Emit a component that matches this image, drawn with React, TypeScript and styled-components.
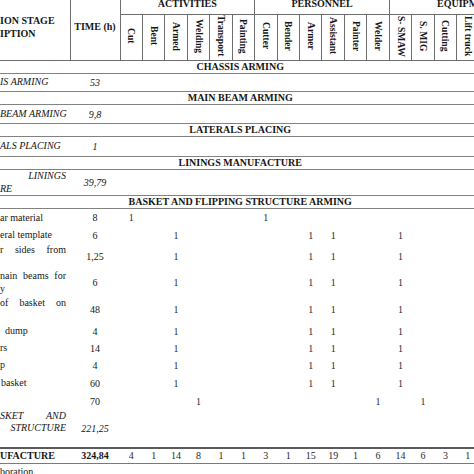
import React from 'react';
import styled, { createGlobalStyle } from 'styled-components';

const GlobalStyle = createGlobalStyle`
  html, body {
    margin: 0;
    padding: 0;
    background: #fff;
    overflow: hidden;
  }
`;

const Viewport = styled.div`
  width: 474px;
  height: 474px;
  overflow: hidden;
  font-family: "Liberation Serif", "Times New Roman", serif;
  color: #161616;
`;

const Table = styled.table`
  border-collapse: collapse;
  table-layout: fixed;
  width: 546.55px;
  margin-top: -7px;
  font-size: 10px;
`;

const Col = styled.col<{ $w: number }>`
  width: ${(p) => p.$w}px;
`;

const HeadCell = styled.th`
  border: 1px solid #6e6e6e;
  border-top: none;
  padding: 0;
  font-weight: bold;
  text-align: center;
  vertical-align: middle;
  line-height: 13px;
  white-space: nowrap;
  overflow: hidden;
`;

const StageHead = styled(HeadCell)`
  border-left: none;
  text-align: left;
`;

const GroupHead = styled(HeadCell)`
  height: 21px;
`;

const SubHead = styled(HeadCell)`
  height: 45px;
`;

const Vertical = styled.span`
  display: inline-block;
  writing-mode: vertical-rl;
  font-size: 9.6px;
  line-height: 10px;
`;

const SectionRow = styled.tr`
  height: 13px;
`;

const SectionCell = styled.td`
  border-top: 1.5px solid #828282;
  border-bottom: 1.5px solid #828282;
  padding: 0 66px 0 0;
  font-weight: bold;
  text-align: center;
  line-height: 10px;
  white-space: nowrap;
`;

const DataRow = styled.tr<{ $h: number }>`
  height: ${(p) => p.$h}px;
`;

const DescCell = styled.td<{ $italic?: boolean }>`
  padding: 0;
  vertical-align: middle;
  overflow: hidden;
  font-style: ${(p) => (p.$italic ? 'italic' : 'normal')};
  line-height: 12.5px;
`;

const DescLine = styled.div<{ $align: 'left' | 'justify' | 'right'; $indent: number }>`
  width: 66px;
  height: 12.5px;
  box-sizing: border-box;
  padding-left: ${(p) => p.$indent}px;
  white-space: nowrap;
  display: flex;
  justify-content: ${(p) =>
    p.$align === 'justify' ? 'space-between' : p.$align === 'right' ? 'flex-end' : 'flex-start'};
`;

const TimeCell = styled.td<{ $italic?: boolean; $bold?: boolean }>`
  padding: 0;
  text-align: center;
  vertical-align: middle;
  line-height: 11px;
  font-style: ${(p) => (p.$italic ? 'italic' : 'normal')};
  font-weight: ${(p) => (p.$bold ? 'bold' : 'normal')};
`;

const MarkCell = styled.td`
  padding: 0;
  text-align: center;
  vertical-align: middle;
  line-height: 11px;
  color: #2a2a2a;
`;

const TotalRow = styled.tr`
  height: 15px;

  & > td {
    border-top: 2px solid #5a5a5a;
    border-bottom: 1.5px solid #7a7a7a;
  }
`;

const TotalLabel = styled.td`
  padding: 0;
  font-weight: bold;
  line-height: 11px;
  white-space: nowrap;
  overflow: hidden;
`;

const Footnote = styled.p`
  margin: 2px 0 0;
  font-size: 10px;
  line-height: 12px;
  white-space: nowrap;
`;

const activities = ['Cut', 'Bent', 'Armed', 'Welding', 'Transport', 'Painting'];
const personnel = ['Cutter', 'Bender', 'Armer', 'Assistant', 'Painter', 'Welder'];
const equipment = ['S- SMAW', 'S. MIG', 'Cutting', 'Lift truck', 'Crane', 'Grinder', 'Drill'];
const columns = [...activities, ...personnel, ...equipment];
const COL_W = 22.45;

type Line = { t: string; align?: 'left' | 'justify' | 'right'; indent?: number };
type Row =
  | { kind: 'section'; title: string }
  | {
      kind: 'data';
      h: number;
      italic?: boolean;
      lines: Line[];
      time: string;
      marks?: Record<number, string>;
    };

const basket = { 2: '1', 8: '1', 9: '1', 12: '1' };

const rows: Row[] = [
  { kind: 'section', title: 'CHASSIS ARMING' },
  { kind: 'data', h: 18, italic: true, lines: [{ t: 'IS ARMING' }], time: '53' },
  { kind: 'section', title: 'MAIN BEAM ARMING' },
  { kind: 'data', h: 19, italic: true, lines: [{ t: 'BEAM ARMING' }], time: '9,8' },
  { kind: 'section', title: 'LATERALS PLACING' },
  { kind: 'data', h: 20, italic: true, lines: [{ t: 'ALS PLACING' }], time: '1' },
  { kind: 'section', title: 'LININGS MANUFACTURE' },
  {
    kind: 'data',
    h: 25,
    italic: true,
    lines: [{ t: 'LININGS', align: 'right' }, { t: 'RE' }],
    time: '39,79',
  },
  { kind: 'section', title: 'BASKET AND FLIPPING STRUCTURE ARMING' },
  { kind: 'data', h: 18, lines: [{ t: 'ar material' }], time: '8', marks: { 0: '1', 6: '1' } },
  { kind: 'data', h: 17, lines: [{ t: 'eral template' }], time: '6', marks: basket },
  {
    kind: 'data',
    h: 26,
    lines: [{ t: 'r sides from', align: 'justify' }, { t: '' }],
    time: '1,25',
    marks: basket,
  },
  {
    kind: 'data',
    h: 26,
    lines: [{ t: 'nain beams for', align: 'justify' }, { t: 'y' }],
    time: '6',
    marks: basket,
  },
  {
    kind: 'data',
    h: 27,
    lines: [{ t: 'of basket on', align: 'justify' }, { t: '' }],
    time: '48',
    marks: basket,
  },
  { kind: 'data', h: 18, lines: [{ t: 'dump', indent: 5 }], time: '4', marks: basket },
  { kind: 'data', h: 16, lines: [{ t: 'rs' }], time: '14', marks: basket },
  { kind: 'data', h: 18, lines: [{ t: 'p' }], time: '4', marks: basket },
  { kind: 'data', h: 18, lines: [{ t: 'basket', indent: 1 }], time: '60', marks: basket },
  { kind: 'data', h: 17, lines: [], time: '70', marks: { 3: '1', 11: '1', 13: '1' } },
  {
    kind: 'data',
    h: 37,
    italic: true,
    lines: [{ t: 'SKET AND', align: 'justify' }, { t: 'STRUCTURE', align: 'right' }, { t: '' }],
    time: '221,25',
  },
];

const totals = ['4', '1', '14', '8', '1', '1', '3', '1', '15', '19', '1', '6', '14', '6', '3', '1', '', '', ''];

const renderLine = (line: Line, i: number) => {
  const align = line.align ?? 'left';
  const words = align === 'justify' ? line.t.split(' ') : [line.t || '\u00a0'];
  return (
    <DescLine key={i} $align={align} $indent={line.indent ?? 0}>
      {words.map((w, j) => (
        <span key={j}>{w}</span>
      ))}
    </DescLine>
  );
};

export default function App() {
  return (
    <Viewport>
      <GlobalStyle />
      <Table>
        <colgroup>
          <Col $w={70} />
          <Col $w={50} />
          {columns.map((c) => (
            <Col key={c} $w={COL_W} />
          ))}
        </colgroup>
        <thead>
          <tr>
            <StageHead rowSpan={2}>
              ION STAGE
              <br />
              IPTION
            </StageHead>
            <HeadCell rowSpan={2}>TIME (h)</HeadCell>
            <GroupHead colSpan={activities.length}>ACTIVITIES</GroupHead>
            <GroupHead colSpan={personnel.length}>PERSONNEL</GroupHead>
            <GroupHead colSpan={equipment.length}>EQUIPMENT</GroupHead>
          </tr>
          <tr>
            {columns.map((c) => (
              <SubHead key={c}>
                <Vertical>{c}</Vertical>
              </SubHead>
            ))}
          </tr>
        </thead>
        <tbody>
          {rows.map((row, i) =>
            row.kind === 'section' ? (
              <SectionRow key={i}>
                <SectionCell colSpan={columns.length + 2}>{row.title}</SectionCell>
              </SectionRow>
            ) : (
              <DataRow key={i} $h={row.h}>
                <DescCell $italic={row.italic}>{row.lines.map(renderLine)}</DescCell>
                <TimeCell $italic={row.italic}>{row.time}</TimeCell>
                {columns.map((c, k) => (
                  <MarkCell key={c}>{row.marks?.[k] ?? ''}</MarkCell>
                ))}
              </DataRow>
            ),
          )}
          <TotalRow>
            <TotalLabel>UFACTURE</TotalLabel>
            <TimeCell $bold>324,84</TimeCell>
            {totals.map((v, k) => (
              <MarkCell key={k}>{v}</MarkCell>
            ))}
          </TotalRow>
        </tbody>
      </Table>
      <Footnote>boration.</Footnote>
    </Viewport>
  );
}
